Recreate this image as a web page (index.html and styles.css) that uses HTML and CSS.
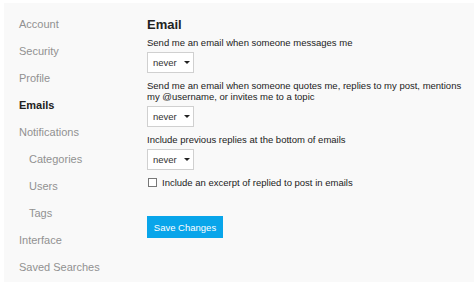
FILE: index.html
```html
<!DOCTYPE html>
<html>
<head>
<meta charset="utf-8">
<link rel="stylesheet" href="styles.css">
</head>
<body>
<div class="panel">
  <nav class="sidebar">
    <div class="nav-item">Account</div>
    <div class="nav-item">Security</div>
    <div class="nav-item">Profile</div>
    <div class="nav-item active">Emails</div>
    <div class="nav-item">Notifications</div>
    <div class="nav-item sub">Categories</div>
    <div class="nav-item sub">Users</div>
    <div class="nav-item sub">Tags</div>
    <div class="nav-item">Interface</div>
    <div class="nav-item">Saved Searches</div>
  </nav>
  <main class="content">
    <h1 class="title">Email</h1>
    <div class="field">
      <div class="label">Send me an email when someone messages me</div>
      <div class="select"><span>never</span><span class="caret"></span></div>
    </div>
    <div class="field">
      <div class="label">Send me an email when someone quotes me, replies to my post, mentions my @username, or invites me to a topic</div>
      <div class="select"><span>never</span><span class="caret"></span></div>
    </div>
    <div class="field">
      <div class="label">Include previous replies at the bottom of emails</div>
      <div class="select"><span>never</span><span class="caret"></span></div>
    </div>
    <label class="check"><span class="box"></span>Include an excerpt of replied to post in emails</label>
    <button class="save">Save Changes</button>
  </main>
</div>
</body>
</html>
```
FILE: styles.css
```css
html, body {
  margin: 0;
  padding: 0;
  background: #ffffff;
}
body {
  font-family: "Liberation Sans", Arial, sans-serif;
  color: #222222;
}
.panel {
  margin: 3px 0 3px 4px;
  height: 279px;
  background: #f9f9f9;
  display: flex;
  padding-left: 15px;
  box-sizing: border-box;
}
.sidebar {
  width: 128px;
  flex: none;
  padding-top: 8px;
}
.nav-item {
  font-size: 11px;
  line-height: 27px;
  height: 27px;
  color: #919191;
}
.nav-item.sub {
  padding-left: 10px;
}
.nav-item.active {
  color: #222222;
  font-weight: bold;
}
.content {
  flex: 1;
  padding-top: 14px;
  padding-right: 6px;
  font-size: 9.5px;
  color: #222222;
}
.title {
  margin: 0;
  font-size: 13px;
  line-height: 16px;
  font-weight: bold;
  color: #222222;
}
.field {
  margin-top: 4px;
  margin-bottom: 7px;
}
.label {
  line-height: 11px;
  margin-bottom: 4px;
}
.select {
  width: 47px;
  height: 21px;
  box-sizing: border-box;
  border: 1px solid #d0d0d0;
  background: #ffffff;
  display: flex;
  align-items: center;
  padding-left: 5px;
  gap: 7px;
  color: #333333;
}
.caret {
  width: 0;
  height: 0;
  border-left: 3px solid transparent;
  border-right: 3px solid transparent;
  border-top: 3px solid #222222;
}
.check {
  display: flex;
  align-items: center;
  line-height: 11px;
  margin-top: 7px;
}
.box {
  width: 7px;
  height: 7px;
  border: 1px solid #777777;
  background: #ffffff;
  margin-left: 1px;
  margin-right: 5px;
}
.save {
  margin-top: 28px;
  display: block;
  width: 76px;
  height: 22px;
  padding: 0;
  border: none;
  background: #08a5ea;
  color: #ffffff;
  font-family: "Liberation Sans", Arial, sans-serif;
  font-size: 9.5px;
}
```
